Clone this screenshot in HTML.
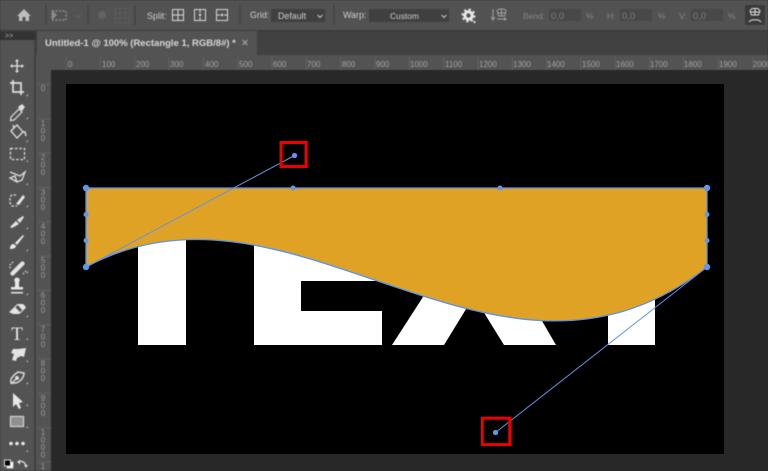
<!DOCTYPE html>
<html lang="en">
<head>
<meta charset="utf-8">
<title>Untitled-1</title>
<style>
html,body{margin:0;padding:0;width:768px;height:471px;overflow:hidden;background:#282828}
svg{display:block;position:absolute;left:0;top:0}
text{font-family:"Liberation Sans",sans-serif}
.t{font-size:8.9px;fill:#cdcdcd}
.d{font-size:8.4px;fill:#858585}
.i{font-size:9.5px;fill:#7e7e7e}
.r{font-size:8px;fill:#a2a2a2}
.v{font-size:8px;fill:#9a9a9a;text-anchor:middle}
.ui{filter:blur(.5px)}
.cv{filter:blur(.25px)}
</style>
</head>
<body>
<svg width="768" height="471" viewBox="0 0 768 471" xmlns="http://www.w3.org/2000/svg">
<rect x="0" y="0" width="768" height="471" fill="#282828"/>
<g class="ui">
<!-- panels -->
<rect x="0" y="0" width="768" height="30" fill="#525252"/>
<rect x="0" y="30" width="768" height="2" fill="#3c3c3c"/>
<rect x="0" y="32" width="768" height="23" fill="#414141"/>
<rect x="0" y="32" width="36" height="8" fill="#333"/>
<text x="5" y="38" font-size="7" fill="#aaa">&gt;&gt;</text>
<rect x="37" y="31" width="220" height="24" fill="#535353"/>
<text x="45" y="46" font-size="9.5" font-weight="bold" fill="#d8d8d8">Untitled-1 @ 100% (Rectangle 1, RGB/8#) *</text>
<path d="M242.500 40l5 5m0-5l-5 5" stroke="#aaa" stroke-width="1" fill="none"/>
<rect x="36" y="55" width="732" height="15" fill="#535353"/>
<rect x="36" y="55" width="15" height="416" fill="#535353"/>
<rect x="0" y="40" width="34" height="431" fill="#535353"/>
<rect x="34" y="40" width="2" height="431" fill="#414141"/>
<rect x="51" y="70" width="717" height="401" fill="#282828"/>

<!-- top bar separators -->
<path d="M46 5v20M88 5v20M135 5v20M240 5v20M334 5v20" stroke="#3e3e3e" stroke-width="1"/>
<!-- home -->
<path d="M17 16l7-7 7 7h-2v5h-3.500v-4h-3v4H19v-5z" fill="#bdbdbd"/>
<!-- dim icons -->
<path d="M52 11h14v9H52z" fill="none" stroke="#8b8b8b" stroke-width="1.500" stroke-dasharray="2 1.500"/>
<path d="M52 10l5 5-5 5z" fill="#8b8b8b"/>
<path d="M76 15l2.500 2.500L81 15" fill="none" stroke="#666"/>
<circle cx="102" cy="15" r="4" fill="#626262"/>
<path d="M115 8h15v15h-15zM120 8v15M125 8v15M115 13h15M115 18h15" fill="none" stroke="#606060" stroke-dasharray="2 1"/>
<!-- split -->
<text x="147" y="19" class="t">Split:</text>
<path d="M172.500 9.500h11v11h-11zM178 9.500v11M172.500 15h11" fill="none" stroke="#d8d8d8" stroke-width="1"/>
<path d="M194.500 9.500h11v11h-11zM200 9.500v3.500M200 17v3.500" fill="none" stroke="#d8d8d8" stroke-width="1"/>
<circle cx="200" cy="15" r="1.200" fill="#e0e0e0"/>
<path d="M216.500 9.500h11v11h-11zM216.500 15h3.500M224 15h3.500" fill="none" stroke="#d8d8d8" stroke-width="1"/>
<circle cx="222" cy="15" r="1.200" fill="#e0e0e0"/>
<!-- grid -->
<text x="250" y="18" class="t">Grid:</text>
<rect x="271" y="9" width="54" height="13" fill="#404040"/>
<text x="278" y="19" class="t">Default</text>
<path d="M317.500 15l2.500 2.500 2.500-2.500" fill="none" stroke="#ccc"/>
<!-- warp -->
<text x="343" y="18" class="t">Warp:</text>
<rect x="369" y="9" width="80" height="13" fill="#404040"/>
<text x="390" y="19" class="t" style="font-size:8.4px">Custom</text>
<path d="M441.500 15l2.500 2.500 2.500-2.500" fill="none" stroke="#ccc"/>
<!-- gear -->
<circle cx="468.500" cy="15.500" r="3.700" fill="none" stroke="#e8e8e8" stroke-width="3"/>
<circle cx="468.500" cy="15.500" r="6" fill="none" stroke="#e8e8e8" stroke-width="2" stroke-dasharray="2.200 2.500"/>
<rect x="473.500" y="21" width="2" height="2" fill="#ddd"/>
<!-- warp orient icon -->
<path d="M493 9v11M491 17l2 3 2-3M497 19h9M504 17.500l2 1.500-2 1.500" fill="none" stroke="#a2a2a2"/>
<path d="M497 11l2-2h5l2 2-1.500 5h-6zM497.500 13h8M501.500 9v7" fill="none" stroke="#a2a2a2"/>
<!-- bend -->
<text x="523" y="19" class="d">Bend:</text>
<rect x="549" y="9" width="32" height="12" fill="#484848"/>
<text x="551" y="19" class="i">0,0</text>
<text x="586" y="19" class="d">%</text>
<text x="607" y="19" class="d">H:</text>
<rect x="620" y="9" width="32" height="12" fill="#484848"/>
<text x="622" y="19" class="i">0,0</text>
<text x="658" y="19" class="d">%</text>
<text x="679" y="19" class="d">V:</text>
<rect x="691" y="9" width="32" height="12" fill="#484848"/>
<text x="693" y="19" class="i">0,0</text>
<text x="728" y="19" class="d">%</text>
<!-- warp toggle -->
<rect x="745" y="5" width="20" height="20" fill="#3a3a3a"/>
<path d="M750 11l2-2.500h6l2 2.500-1.500 4h-7zM751 12h8M755 8.500V15M749 22c2-3 10-3 12 0" fill="none" stroke="#e4e4e4" stroke-width="1"/>

<!-- horizontal ruler -->
<path d="M100.500 57v13M134.800 57v13M169 57v13M203.500 57v13M237.800 57v13M272 57v13M306.500 57v13M340.800 57v13M375 57v13M409.500 57v13M443.800 57v13M478 57v13M512.500 57v13M546.800 57v13M581 57v13M615.500 57v13M649.800 57v13M684 57v13M718.500 57v13M752.800 57v13M66.500 57v13" stroke="#686868" stroke-width=".7"/>
<text class="r" x="68" y="67">0</text>
<text class="r" x="102" y="67">100</text>
<text class="r" x="136" y="67">200</text>
<text class="r" x="170" y="67">300</text>
<text class="r" x="205" y="67">400</text>
<text class="r" x="239" y="67">500</text>
<text class="r" x="273" y="67">600</text>
<text class="r" x="307" y="67">700</text>
<text class="r" x="342" y="67">800</text>
<text class="r" x="376" y="67">900</text>
<text class="r" x="410" y="67">1000</text>
<text class="r" x="445" y="67">1100</text>
<text class="r" x="479" y="67">1200</text>
<text class="r" x="513" y="67">1300</text>
<text class="r" x="547" y="67">1400</text>
<text class="r" x="582" y="67">1500</text>
<text class="r" x="616" y="67">1600</text>
<text class="r" x="650" y="67">1700</text>
<text class="r" x="684" y="67">1800</text>
<text class="r" x="719" y="67">1900</text>
<text class="r" x="753" y="67">2000</text>

<!-- vertical ruler -->
<path d="M38 84.500h13M38 118.800h13M38 153h13M38 187.500h13M38 221.800h13M38 256h13M38 290.500h13M38 324.800h13M38 359h13M38 393.500h13M38 427.800h13M38 462h13" stroke="#686868" stroke-width=".7"/>
<text class="v" x="43" y="91">0</text>
<text class="v" x="43" y="126">1</text><text class="v" x="43" y="133.500">0</text><text class="v" x="43" y="141">0</text>
<text class="v" x="43" y="160">2</text><text class="v" x="43" y="167.500">0</text><text class="v" x="43" y="175">0</text>
<text class="v" x="43" y="195">3</text><text class="v" x="43" y="202.500">0</text><text class="v" x="43" y="210">0</text>
<text class="v" x="43" y="229">4</text><text class="v" x="43" y="236.500">0</text><text class="v" x="43" y="244">0</text>
<text class="v" x="43" y="263">5</text><text class="v" x="43" y="270.500">0</text><text class="v" x="43" y="278">0</text>
<text class="v" x="43" y="298">6</text><text class="v" x="43" y="305.500">0</text><text class="v" x="43" y="313">0</text>
<text class="v" x="43" y="332">7</text><text class="v" x="43" y="339.500">0</text><text class="v" x="43" y="347">0</text>
<text class="v" x="43" y="366">8</text><text class="v" x="43" y="373.500">0</text><text class="v" x="43" y="381">0</text>
<text class="v" x="43" y="401">9</text><text class="v" x="43" y="408.500">0</text><text class="v" x="43" y="416">0</text>
<text class="v" x="43" y="435">1</text><text class="v" x="43" y="442.500">0</text><text class="v" x="43" y="450">0</text><text class="v" x="43" y="457.500">0</text>
<text class="v" x="43" y="469">1</text>

<!-- tools -->
<g fill="none" stroke="#e0e0e0" stroke-width="1.300">
<!-- move -->
<path d="M17 60v12M11 66h12"/>
<path d="M17 59l-2 2.500h4zM17 73l-2-2.500h4zM10 66l2.500-2v4zM24 66l-2.500-2v4z" fill="#e0e0e0" stroke="none"/>
<!-- crop -->
<path d="M13 80v12h11M10 83h11v12" stroke-width="1.700"/>
<!-- eyedropper -->
<path d="M11 117l8-8 3 3-8 8-3.500.5z" stroke-width="1.200"/>
<path d="M18 107l4-3 3 3-3 4z" fill="#e0e0e0" stroke="none"/>
<!-- bucket -->
<path d="M11 131l6-6 6 7-6 6z"/>
<path d="M14 128l-1-3M23 132h2l1 4" stroke-width="1.400"/>
<!-- marquee -->
<path d="M10.500 148.500h14v11h-14z" stroke-dasharray="2.600 1.800"/>
<!-- lasso -->
<path d="M10 172l10 4 5-4-3 8-5 2-7-4 5-2 2 6" stroke-width="1.300"/>
<!-- quick select -->
<path d="M16 195h-4.500l-1.500 3v5l2 3h5" stroke-dasharray="2.400 1.600"/>
<path d="M16 204l7-9 2 2-6 8z" fill="#e8e8e8" stroke="none"/>
<!-- mixer/smudge -->
<path d="M10 227l6-6 3 3-7 4zM17 220l6-4 1 1-4 6z" fill="#e4e4e4" stroke="none"/>
<!-- brush -->
<path d="M10 249c0-4 2-5 4-5l2 2c0 2-3 3-6 3zM15 243l8-8 1 1-7 9z" fill="#e8e8e8" stroke="none"/>
<!-- heal -->
<path d="M11 272l10-10c2-2 5 1 3 3l-10 10c-2 2-5-1-3-3z" fill="#e4e4e4" stroke="none"/>
<path d="M13 262l-3 3v4M23 274l3-3" stroke-dasharray="1.500 1.500"/>
<!-- stamp -->
<path d="M15 282a2.700 2.700 0 1 1 4 0v5h4v2.500h-12V287h4zM11 292h12v1.500H11z" fill="#e8e8e8" stroke="none"/>
<!-- eraser -->
<path d="M10 312l7-7h5l3 3-5 5h-8z" stroke-width="1.100"/>
<path d="M15 307l-5 5 3 2h6l1-2z" fill="#e4e4e4" stroke="none"/>
<path d="M17 304h6l3 3-4 3z" fill="#e4e4e4" stroke="none"/>
<!-- pen -->
<path d="M11 383c-1-3 1-7 7-11l6 1c0 3-2 8-8 10z" stroke-width="1.400"/>
<path d="M11 384l6-6"/>
<circle cx="17" cy="378" r="1.300" fill="#e0e0e0"/>
<!-- rect -->
<rect x="10.500" y="416.500" width="13" height="10" fill="#8f8f8f" stroke="#cfcfcf" stroke-width="1.300"/>
</g>
<!-- type -->
<text x="17" y="340" font-family="Liberation Serif" font-size="19" fill="#e8e8e8" text-anchor="middle" style="font-family:'Liberation Serif',serif">T</text>
<!-- smudge -->
<path d="M13 349h5l8-1-2 9-3-1-4 2-1 3-4-1 2-6-3-1z" fill="#e4e4e4"/>
<!-- arrow -->
<path d="M13 393l10 9-4 1 2 5-2 1-3-5-3 3z" fill="#e8e8e8"/>
<!-- dots -->
<circle cx="11" cy="443.500" r="1.800" fill="#e8e8e8"/><circle cx="17" cy="443.500" r="1.800" fill="#e8e8e8"/><circle cx="23" cy="443.500" r="1.800" fill="#e8e8e8"/>
<!-- fg bg -->
<rect x="7" y="462" width="6" height="6" fill="#fff" stroke="#ccc"/>
<rect x="4.500" y="460" width="6" height="6" fill="#000" stroke="#ddd"/>
<path d="M19 462c3-1.500 6 0 7 4" fill="none" stroke="#ddd" stroke-width="1.300"/>
<path d="M20 459.500v5l-3-2.500zM24 465h4l-2 3z" fill="#ddd"/>
<!-- flyout marks -->
<path d="M28 94v2h-2zM28 117v2h-2zM28 140v2h-2zM28 160v2h-2zM28 183v2h-2zM28 205v2h-2zM28 227v2h-2zM28 249v2h-2zM28 271v2h-2zM28 293v2h-2zM28 315v2h-2zM28 338v2h-2zM28 360v2h-2zM28 382v2h-2zM28 404v2h-2zM28 426v2h-2zM28 450v2h-2z" fill="#bdbdbd"/>
</g>

<g class="cv">
<!-- canvas -->
<rect x="66" y="84" width="658" height="370" fill="#000"/>
<!-- text -->
<g fill="#fff">
<rect x="138" y="200" width="48" height="145"/>
<path d="M254 200h130v81h-83v30h81v34H254z"/>
<path d="M392 345l40-62h50l-38 62z"/>
<path d="M470 290h54l32 55h-52z"/>
<rect x="608" y="280" width="47" height="65"/>
</g>
<!-- warped shape -->
<path d="M86 188H707V267C495 432 294 155 86 267Z" fill="#e0a225"/>
<path d="M86 188H707V267C495 432 294 155 86 267Z" fill="none" stroke="#5a93ea" stroke-width="1.300"/>
<path d="M86 267L294.500 155.500M707 267L495.500 432.500" stroke="#5f94e6" stroke-width="1"/>
<g fill="#5f97ee">
<circle cx="86" cy="188" r="3.200"/><circle cx="707" cy="188" r="3.200"/><circle cx="86" cy="267" r="3.200"/><circle cx="707" cy="267" r="3.200"/>
<circle cx="293" cy="188" r="2.500"/><circle cx="500" cy="188" r="2.500"/>
<circle cx="86" cy="214.500" r="2.500"/><circle cx="86" cy="240.500" r="2.500"/>
<circle cx="707" cy="214.500" r="2.500"/><circle cx="707" cy="240.500" r="2.500"/>
<circle cx="294.500" cy="155.500" r="2.600"/><circle cx="495.500" cy="432.500" r="2.600"/>
</g>
<rect x="281" y="142.500" width="25" height="24" fill="none" stroke="#ee0000" stroke-width="3"/>
<rect x="482.200" y="418.200" width="27.600" height="26.400" fill="none" stroke="#ee0000" stroke-width="3"/>
</g>
</svg>
</body>
</html>
